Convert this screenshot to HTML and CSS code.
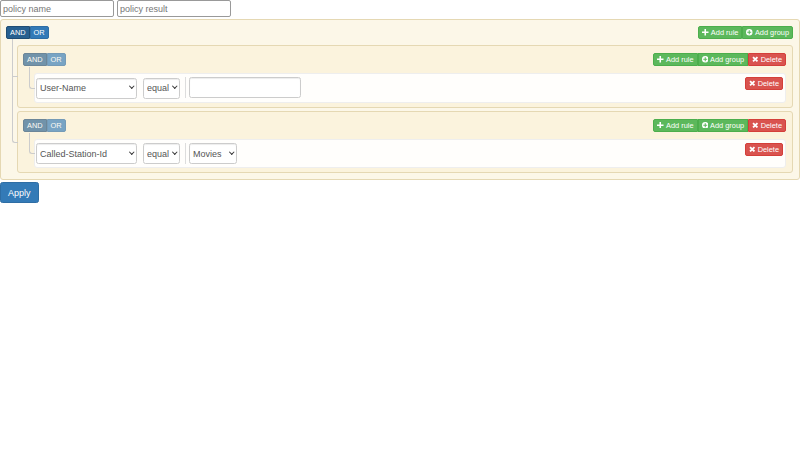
FILE: index.html
```html
<!DOCTYPE html>
<html lang="en">
<head>
  <meta charset="UTF-8" />
  <title>Policy builder</title>
  <link rel="stylesheet" href="styles.css">
</head>
<body>

  <div class="policy-fields">
    <input type="text" class="policy-input" placeholder="policy name" />
    <input type="text" class="policy-input" placeholder="policy result" />
  </div>

  <div class="query-builder">
    <div class="group">
      <div class="group-header">
        <div class="btn-group">
          <button class="btn btn-primary active">AND</button>
          <button class="btn btn-primary">OR</button>
        </div>
        <div class="btn-group">
          <button class="btn btn-success"><svg class="icon" viewBox="0 0 10 10"><path d="M3.8 0h2.4v3.8H10v2.4H6.2V10H3.8V6.2H0V3.8h3.8z"/></svg> Add rule</button>
          <button class="btn btn-success"><svg class="icon" viewBox="0 0 10 10"><path fill-rule="evenodd" d="M5 0a5 5 0 1 1 0 10A5 5 0 0 1 5 0zM4.2 2v2.2H2v1.6h2.2V8h1.6V5.8H8V4.2H5.8V2z"/></svg> Add group</button>
        </div>
      </div>

      <ul class="rules-list">
        <li class="group">
          <div class="group-header">
            <div class="btn-group disabled">
              <button class="btn btn-primary active">AND</button>
              <button class="btn btn-primary">OR</button>
            </div>
            <div class="btn-group">
              <button class="btn btn-success"><svg class="icon" viewBox="0 0 10 10"><path d="M3.8 0h2.4v3.8H10v2.4H6.2V10H3.8V6.2H0V3.8h3.8z"/></svg> Add rule</button>
              <button class="btn btn-success"><svg class="icon" viewBox="0 0 10 10"><path fill-rule="evenodd" d="M5 0a5 5 0 1 1 0 10A5 5 0 0 1 5 0zM4.2 2v2.2H2v1.6h2.2V8h1.6V5.8H8V4.2H5.8V2z"/></svg> Add group</button>
              <button class="btn btn-danger"><svg class="icon" viewBox="0 0 10 10"><path d="M1.6 1.6l6.8 6.8M8.4 1.6l-6.8 6.8" stroke="currentColor" stroke-width="2.8"/></svg> Delete</button>
            </div>
          </div>
          <ul class="rules-list">
            <li class="rule">
              <span class="select-wrap filter">
                <select class="form-control">
                  <option>User-Name</option>
                  <option>Called-Station-Id</option>
                </select>
              </span>
              <span class="select-wrap operator">
                <select class="form-control">
                  <option>equal</option>
                </select>
              </span>
              <div class="value-container">
                <input type="text" class="form-control value-input" />
              </div>
              <button class="btn btn-danger rule-delete"><svg class="icon" viewBox="0 0 10 10"><path d="M1.6 1.6l6.8 6.8M8.4 1.6l-6.8 6.8" stroke="currentColor" stroke-width="2.8"/></svg> Delete</button>
            </li>
          </ul>
        </li>

        <li class="group">
          <div class="group-header">
            <div class="btn-group disabled">
              <button class="btn btn-primary active">AND</button>
              <button class="btn btn-primary">OR</button>
            </div>
            <div class="btn-group">
              <button class="btn btn-success"><svg class="icon" viewBox="0 0 10 10"><path d="M3.8 0h2.4v3.8H10v2.4H6.2V10H3.8V6.2H0V3.8h3.8z"/></svg> Add rule</button>
              <button class="btn btn-success"><svg class="icon" viewBox="0 0 10 10"><path fill-rule="evenodd" d="M5 0a5 5 0 1 1 0 10A5 5 0 0 1 5 0zM4.2 2v2.2H2v1.6h2.2V8h1.6V5.8H8V4.2H5.8V2z"/></svg> Add group</button>
              <button class="btn btn-danger"><svg class="icon" viewBox="0 0 10 10"><path d="M1.6 1.6l6.8 6.8M8.4 1.6l-6.8 6.8" stroke="currentColor" stroke-width="2.8"/></svg> Delete</button>
            </div>
          </div>
          <ul class="rules-list">
            <li class="rule">
              <span class="select-wrap filter">
                <select class="form-control">
                  <option>Called-Station-Id</option>
                  <option>User-Name</option>
                </select>
              </span>
              <span class="select-wrap operator">
                <select class="form-control">
                  <option>equal</option>
                </select>
              </span>
              <div class="value-container">
                <span class="select-wrap value-select">
                  <select class="form-control">
                    <option>Movies</option>
                  </select>
                </span>
              </div>
              <button class="btn btn-danger rule-delete"><svg class="icon" viewBox="0 0 10 10"><path d="M1.6 1.6l6.8 6.8M8.4 1.6l-6.8 6.8" stroke="currentColor" stroke-width="2.8"/></svg> Delete</button>
            </li>
          </ul>
        </li>
      </ul>
    </div>
  </div>

  <button class="btn-apply">Apply</button>

</body>
</html>
```

FILE: styles.css
```css
body {
  margin: 0;
  font-family: "Liberation Sans", Arial, sans-serif;
  color: #333;
  background: #fff;
}

.policy-fields {
  display: flex;
  gap: 3px;
}

.policy-input {
  width: 114px;
  height: 17px;
  box-sizing: border-box;
  border: 1px solid #999;
  border-radius: 2px;
  padding: 0 2px;
  font: 9px "Liberation Sans", Arial, sans-serif;
  color: #333;
}

.policy-input::placeholder {
  color: #757575;
}

/* groups */
.group {
  background: rgba(250, 240, 210, 0.5);
  border: 1px solid #e5d8b3;
  border-radius: 3px;
  padding: 6px 6px 6px 5px;
  margin: 2px 0;
}

.rules-list .group {
  padding-top: 7px;
  padding-bottom: 4px;
  margin: 0;
}

.group-header {
  display: flex;
  justify-content: space-between;
  align-items: flex-start;
  margin-bottom: 6px;
}

.rules-list .group > .group-header {
  margin-bottom: 7px;
}

.rules-list {
  list-style: none;
  margin: 0;
  padding: 0 0 0 11px;
}

.rules-list > li {
  position: relative;
}

.rules-list > li.group + li.group {
  margin-top: 3px;
}

/* connector lines */
.rules-list > li::before,
.rules-list > li::after {
  content: '';
  position: absolute;
  left: -6px;
  width: 6px;
  box-sizing: border-box;
  border-color: #ccc;
  border-style: solid;
}

.rules-list > li::before {
  top: -3px;
  height: calc(50% + 4px);
  border-width: 0 0 1px 1px;
}

.rules-list > li:first-child::before {
  top: -7px;
  height: calc(50% + 8px);
}

.rules-list > li::after {
  top: 50%;
  height: calc(50% + 3px);
  border-width: 0 0 0 1px;
}

.rules-list > li:last-child::before {
  border-radius: 0 0 0 3px;
}

.rules-list > li:last-child::after {
  display: none;
}

/* buttons */
.btn-group {
  display: flex;
}

.btn {
  display: inline-flex;
  align-items: center;
  gap: 2px;
  box-sizing: border-box;
  height: 13px;
  padding: 0 3px;
  border: 1px solid transparent;
  border-radius: 0;
  font-family: "Liberation Sans", Arial, sans-serif;
  font-size: 7.4px;
  line-height: 11px;
  color: #fff;
  cursor: pointer;
  white-space: nowrap;
}

.btn-group .btn:first-child {
  border-radius: 2px 0 0 2px;
}

.btn-group .btn:last-child {
  border-radius: 0 2px 2px 0;
}

.btn-primary {
  background: #337ab7;
  border-color: #2e6da4;
}

.btn-primary.active {
  background: #286090;
  border-color: #204d74;
}

.btn-group.disabled .btn {
  opacity: 0.65;
}

.btn-success {
  background: #5cb85c;
  border-color: #4cae4c;
}

.btn-danger {
  background: #d9534f;
  border-color: #d43f3a;
}

.icon {
  width: 6.5px;
  height: 6.5px;
  fill: currentColor;
  flex-shrink: 0;
}

/* rule row */
.rule {
  display: flex;
  align-items: flex-start;
  background: rgba(255, 255, 255, 0.9);
  border: 1px solid #eee;
  border-radius: 3px;
  padding: 3px 2px 3px 1px;
}

.form-control {
  height: 21px;
  width: 100%;
  box-sizing: border-box;
  border: 1px solid #ccc;
  border-radius: 2.5px;
  background: #fff;
  box-shadow: inset 0 1px 1px rgba(0, 0, 0, 0.075);
  font: 9px "Liberation Sans", Arial, sans-serif;
  color: #555;
  padding: 0 10px 0 3px;
  margin: 0;
}

select.form-control {
  appearance: none;
  -webkit-appearance: none;
}

.select-wrap {
  position: relative;
  display: block;
}

.select-wrap::after {
  content: '';
  position: absolute;
  right: 4px;
  top: 7px;
  width: 2.5px;
  height: 2.5px;
  border-right: 1.2px solid #333;
  border-bottom: 1.2px solid #333;
  transform: rotate(45deg);
  pointer-events: none;
}

.filter {
  width: 101px;
}

.operator {
  width: 37px;
  margin-left: 6px;
}

.value-container {
  display: flex;
  margin-left: 5px;
  padding-left: 3px;
  border-left: 1px solid #ddd;
}

.value-input {
  width: 112px;
  padding-right: 3px;
}

.value-select {
  width: 48px;
}

.rule .rule-delete {
  margin-left: auto;
  border-radius: 2px;
}

.btn-apply {
  display: block;
  margin-top: 2px;
  height: 21px;
  padding: 0 7px;
  box-sizing: border-box;
  background: #337ab7;
  border: 1px solid #2e6da4;
  border-radius: 2.5px;
  color: #fff;
  font: 9px "Liberation Sans", Arial, sans-serif;
  cursor: pointer;
}
```
